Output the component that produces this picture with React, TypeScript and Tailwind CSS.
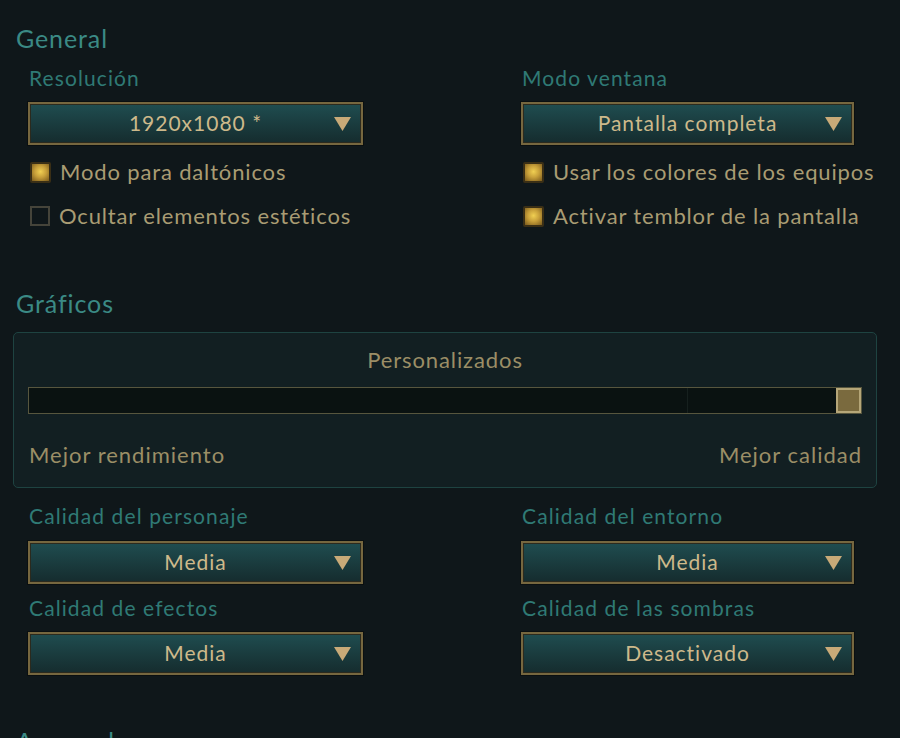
import React from "react";

interface DropdownProps {
  value: string;
}

const Dropdown: React.FC<DropdownProps> = ({ value }) => {
  return (
    <div className="relative flex h-[43px] items-center justify-center border-2 border-[#76673f] bg-gradient-to-b from-[#1f4d50] to-[#152c2e] pb-[3px] shadow-[inset_0_0_0_1px_#2b2a1e,0_0_0_1px_#0a0f10]">
      <span className="whitespace-nowrap text-[21px] leading-none tracking-[1px] text-[#cdb98b]">{value}</span>
      <svg className="absolute right-[10px] top-[13px]" width="17" height="14" viewBox="0 0 17 14">
        <polygon points="0,0 17,0 8.5,14" fill="#c8aa78" />
      </svg>
    </div>
  );
};

interface CheckProps {
  label: string;
  checked: boolean;
}

const Check: React.FC<CheckProps> = ({ label, checked }) => {
  return (
    <div className="flex h-6 items-center gap-[9px] pl-[2px]">
      {checked ? (
        <div className="h-[21px] w-[21px] shrink-0 rounded-[2px] border-2 border-[#3a2f16] bg-[radial-gradient(circle_at_50%_45%,#f0cf52_0%,#c8a03a_45%,#7a5a1c_100%)]" />
      ) : (
        <div className="h-[20px] w-[20px] shrink-0 border-2 border-[#45443a]" />
      )}
      <span className="whitespace-nowrap text-[22px] leading-6 tracking-[0.85px] text-[#a99c73]">{label}</span>
    </div>
  );
};

const Label: React.FC<{ text: string }> = ({ text }) => (
  <div className="whitespace-nowrap pl-[1px] text-[21px] leading-6 tracking-[1.1px] text-[#2f7a75]">{text}</div>
);

const Heading: React.FC<{ text: string; className?: string }> = ({ text, className }) => (
  <h2 className={`pl-4 text-[25px] leading-7 tracking-[0.9px] text-[#3b8a85] ${className ?? ""}`}>{text}</h2>
);

export default function App() {
  return (
    <div
      className="h-[738px] w-[900px] overflow-hidden bg-[#0f171a] pt-6"
      style={{ fontFamily: "Lato, 'Open Sans', sans-serif" }}
    >
      <Heading text="General" />

      <div className="mt-[14px] grid grid-cols-[335px_333px] gap-x-[158px] pl-7">
        <div>
          <Label text="Resolución" />
          <div className="mt-3">
            <Dropdown value="1920x1080 *" />
          </div>
          <div className="mt-[15px] flex flex-col gap-5">
            <Check label="Modo para daltónicos" checked />
            <Check label="Ocultar elementos estéticos" checked={false} />
          </div>
        </div>
        <div>
          <Label text="Modo ventana" />
          <div className="mt-3">
            <Dropdown value="Pantalla completa" />
          </div>
          <div className="mt-[15px] flex flex-col gap-5">
            <Check label="Usar los colores de los equipos" checked />
            <Check label="Activar temblor de la pantalla" checked />
          </div>
        </div>
      </div>

      <Heading text="Gráficos" className="mt-[61px]" />

      <div className="mx-[13px] mt-[15px] w-[864px] rounded-[5px] border border-[#1e4341] bg-[#121f22] px-[14px] pb-5 pt-[15px]">
        <div className="text-center text-[22px] leading-6 tracking-[0.9px] text-[#9b8e66]">Personalizados</div>
        <div className="relative mt-[15px] h-[27px] border border-[#57563e] bg-[#0a1211]">
          <div className="absolute left-[658px] top-0 h-full w-px bg-[#16201e]" />
          <div className="absolute right-0 top-0 h-[25px] w-[25px] border-2 border-[#b5a678] bg-[#7a6a3e]" />
        </div>
        <div className="mt-[29px] flex justify-between text-[22px] leading-6 tracking-[1px] text-[#9b8e66]">
          <span className="pl-px">Mejor rendimiento</span>
          <span>Mejor calidad</span>
        </div>
      </div>

      <div className="mt-4 grid grid-cols-[335px_333px] gap-x-[158px] pl-7">
        <div>
          <Label text="Calidad del personaje" />
          <div className="mt-[13px]">
            <Dropdown value="Media" />
          </div>
          <div className="mt-3">
            <Label text="Calidad de efectos" />
          </div>
          <div className="mt-3">
            <Dropdown value="Media" />
          </div>
        </div>
        <div>
          <Label text="Calidad del entorno" />
          <div className="mt-[13px]">
            <Dropdown value="Media" />
          </div>
          <div className="mt-3">
            <Label text="Calidad de las sombras" />
          </div>
          <div className="mt-3">
            <Dropdown value="Desactivado" />
          </div>
        </div>
      </div>

      <Heading text="Avanzados" className="mt-[52px]" />
    </div>
  );
}
